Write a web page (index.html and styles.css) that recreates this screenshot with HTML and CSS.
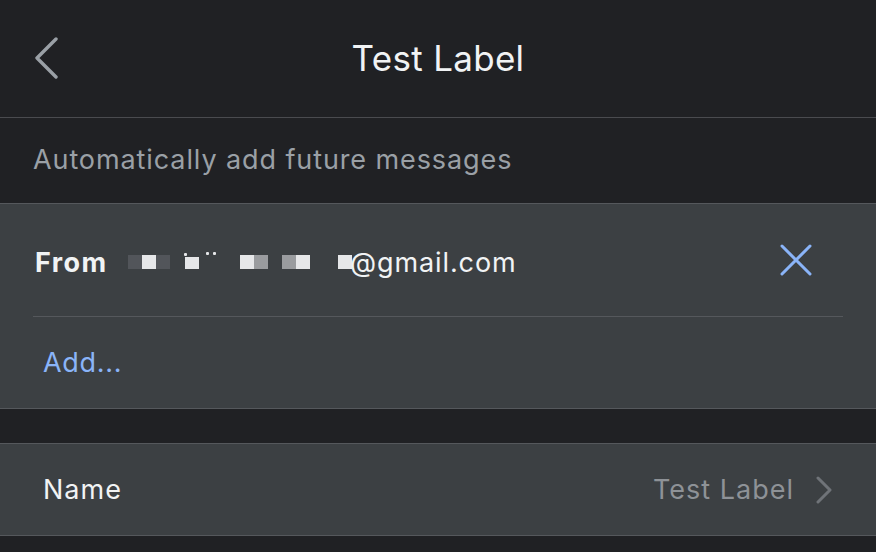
FILE: index.html
```html
<!DOCTYPE html>
<html>
<head>
<meta charset="utf-8">
<link rel="stylesheet" href="styles.css">
</head>
<body>
<header class="topbar">
  <div class="topbar-left">
    <svg class="back-icon" width="26" height="42" viewBox="0 0 26 42"><path d="M23 2 L4 21 L23 40" fill="none" stroke="#9aa0a6" stroke-width="3.4" stroke-linecap="round" stroke-linejoin="round"/></svg>
  </div>
  <h1 class="title">Test Label</h1>
  <div class="topbar-right"></div>
</header>
<div class="section-label">Automatically add future messages</div>
<section class="card">
  <div class="row from-row">
    <span class="from-key">From</span>
    <span class="email">
      <span class="redact">
        <i class="px px-d"></i><i class="px px-l"></i><i class="px px-d"></i>
        <i class="gap-s"></i>
        <i class="dot dot-a"></i><i class="px px-l px-narrow"></i>
        <i class="dots"><i class="dot"></i><i class="dot"></i></i>
        <i class="gap-a"></i>
        <i class="px px-l"></i><i class="px px-m"></i>
        <i class="gap-s"></i>
        <i class="px px-m"></i><i class="px px-l"></i>
        <i class="gap-b"></i>
        <i class="px px-l"></i>
      </span><span class="domain">@gmail.com</span>
    </span>
    <svg class="close-icon" width="32" height="32" viewBox="0 0 32 32"><path d="M2 2 L30 30 M30 2 L2 30" fill="none" stroke="#8ab4f8" stroke-width="3" stroke-linecap="round"/></svg>
  </div>
  <div class="divider"></div>
  <div class="row add-row"><span class="add-link">Add...</span></div>
</section>
<section class="card name-card">
  <div class="row name-row">
    <span class="name-key">Name</span>
    <span class="name-value">Test Label</span>
    <svg class="chev-icon" width="18" height="28" viewBox="0 0 18 28"><path d="M3 2 L15 14 L3 26" fill="none" stroke="#6f7378" stroke-width="3" stroke-linecap="round" stroke-linejoin="round"/></svg>
  </div>
</section>
</body>
</html>
```

FILE: styles.css
```css
html, body {
  margin: 0;
  padding: 0;
  background: #202124;
  font-family: Inter, "Liberation Sans", Arial, sans-serif;
  color: #e8eaed;
}
.topbar {
  height: 117px;
  display: grid;
  grid-template-columns: 1fr auto 1fr;
  align-items: center;
  border-bottom: 1px solid #4a4b4f;
}
.topbar-left {
  padding-left: 33px;
  display: flex;
  align-items: center;
  padding-bottom: 1px;
}
.back-icon { display: block; }
.title {
  margin: 0;
  font-size: 35px;
  font-weight: 400;
  color: #f1f3f4;
  letter-spacing: 0.3px;
  padding-bottom: 2px;
}
.section-label {
  height: 85px;
  display: flex;
  align-items: center;
  padding-left: 33px;
  font-size: 27px;
  color: #9aa0a6;
  letter-spacing: 0.9px;
  padding-bottom: 2px;
  box-sizing: border-box;
}
.card {
  background: #3c4043;
  border-top: 1px solid #55585c;
  border-bottom: 1px solid #55585c;
}
.row {
  display: flex;
  align-items: center;
}
.from-row {
  height: 112px;
  padding: 0 64px 0 35px;
}
.from-key {
  font-size: 27px;
  font-weight: 700;
  color: #f1f3f4;
  width: 93px;
  padding-top: 4px;
  letter-spacing: 1.4px;
}
.email {
  flex: 1;
  display: flex;
  align-items: center;
  font-size: 27px;
  color: #f1f3f4;
  padding-top: 4px;
}
.redact {
  display: flex;
  align-items: center;
  height: 14px;
}
.redact i { display: block; font-style: normal; }
.px { width: 14px; height: 14px; }
.px-narrow { width: 14px; height: 12px; margin-top: 2px; }
.px-d { background: #52555a; }
.px-l { background: #e6e7e9; }
.px-m { background: #9a9c9f; }
.gap-s { width: 14px; }
.gap-a { width: 24px; }
.gap-b { width: 28px; }
.dot { width: 3px; height: 3px; background: #e6e7e9; border-radius: 1px; }
.dot-a { align-self: flex-start; margin-top: -2px; margin-right: -2px; }
.dots {
  display: flex !important;
  gap: 4px;
  align-self: flex-start;
  margin: -3px 0 0 7px;
}
.domain { margin-left: -2px; letter-spacing: 0.9px; }
.close-icon { display: block; }
.divider {
  height: 1px;
  margin: 0 33px;
  background: #55585c;
}
.add-row {
  height: 91px;
  padding-left: 43px;
}
.add-link {
  font-size: 27px;
  color: #8ab4f8;
  letter-spacing: 0.7px;
}
.name-card { margin-top: 34px; }
.name-row {
  height: 91px;
  padding: 0 43px 0 43px;
}
.name-key {
  flex: 1;
  font-size: 27px;
  color: #f1f3f4;
  letter-spacing: 1px;
}
.name-value {
  font-size: 27px;
  color: #8e9297;
  margin-right: 21px;
  letter-spacing: 1px;
}
.chev-icon { display: block; }
```
